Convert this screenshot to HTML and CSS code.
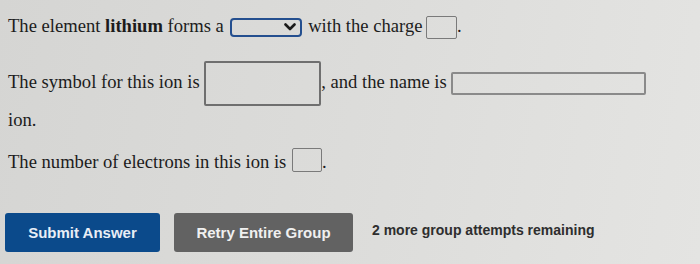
FILE: index.html
```html
<!DOCTYPE html>
<html>
<head>
<meta charset="utf-8">
<link rel="stylesheet" href="styles.css">
</head>
<body>
<div class="question">
  <p class="line line-first">The element <b>lithium</b> forms a <span class="select"><svg class="chev" viewBox="0 0 12 8" width="12" height="8"><path d="M1.5 1.5 L6 6 L10.5 1.5" fill="none" stroke="#1a1a1a" stroke-width="2.6" stroke-linecap="round" stroke-linejoin="round"/></svg></span> with the charge <span class="box box-charge"></span>.</p>
  <p class="line line-symbol">The symbol for this ion is <span class="box box-symbol"></span>, and the name is <span class="box box-name"></span> ion.</p>
  <p class="line line-electrons">The number of electrons in this ion is <span class="box box-electrons"></span>.</p>
</div>
<div class="actions">
  <button class="btn btn-submit">Submit Answer</button>
  <button class="btn btn-retry">Retry Entire Group</button>
  <span class="remaining">2 more group attempts remaining</span>
</div>
</body>
</html>
```
FILE: styles.css
```css
html, body {
  margin: 0;
  padding: 0;
}
body {
  width: 700px;
  height: 264px;
  overflow: hidden;
  background: linear-gradient(100deg, #d5d5d3 0%, #dcdcda 50%, #e4e4e2 100%);
  font-family: "Liberation Serif", "Times New Roman", serif;
  font-size: 18.6px;
  color: #1c1c1c;
}
.question {
  padding: 0 0 0 8px;
  width: 660px;
}
.line {
  margin: 0;
  line-height: 22px;
}
.line-first {
  padding-top: 15px;
}
.line-symbol {
  margin-top: 22px;
  line-height: 28px;
}
.line-electrons {
  margin-top: 14px;
}
.select {
  display: inline-block;
  box-sizing: border-box;
  width: 72px;
  height: 19px;
  border: 2px solid #244f8f;
  border-radius: 4px;
  vertical-align: middle;
  position: relative;
  margin: 0 2px 0 1px;
}
.chev {
  position: absolute;
  right: 4px;
  top: 3px;
}
.box {
  display: inline-block;
  box-sizing: border-box;
  border: 1px solid #7a7a7a;
  border-radius: 2px;
  vertical-align: middle;
  background: transparent;
}
.box-charge {
  width: 31px;
  height: 23px;
  margin-left: -1px;
}
.box-symbol {
  width: 117px;
  height: 45px;
  border-width: 2px;
  border-color: #6f6f6f;
  margin-left: 0;
}
.box-name {
  width: 195px;
  height: 23px;
  border-width: 2px;
  border-color: #8a8a8a;
  margin-left: 0;
}
.box-electrons {
  width: 30px;
  height: 24px;
  vertical-align: -4px;
  margin-left: 1px;
}
.actions {
  display: flex;
  align-items: center;
  margin-top: 40px;
  padding-left: 5px;
}
.btn {
  font-family: "Liberation Sans", Arial, sans-serif;
  font-weight: bold;
  font-size: 15px;
  color: #f2f2f2;
  border: none;
  border-radius: 3px;
  height: 39px;
  padding: 0;
}
.btn-submit {
  width: 155px;
  background: #0b4a8b;
  color: #e8eef6;
}
.btn-retry {
  width: 179px;
  margin-left: 14px;
  background: #626262;
  color: #f0f0f0;
}
.remaining {
  margin-left: 19px;
  font-family: "Liberation Sans", Arial, sans-serif;
  font-weight: bold;
  font-size: 14px;
  color: #2e2e2e;
  margin-top: -6px;
}
```
